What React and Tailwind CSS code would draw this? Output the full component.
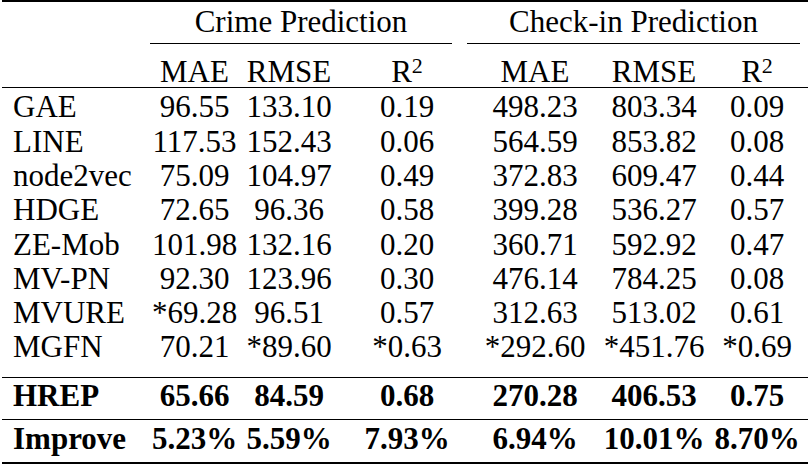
import React from 'react';

const rows = [
  ['GAE', '96.55', '133.10', '0.19', '498.23', '803.34', '0.09'],
  ['LINE', '117.53', '152.43', '0.06', '564.59', '853.82', '0.08'],
  ['node2vec', '75.09', '104.97', '0.49', '372.83', '609.47', '0.44'],
  ['HDGE', '72.65', '96.36', '0.58', '399.28', '536.27', '0.57'],
  ['ZE-Mob', '101.98', '132.16', '0.20', '360.71', '592.92', '0.47'],
  ['MV-PN', '92.30', '123.96', '0.30', '476.14', '784.25', '0.08'],
  ['MVURE', '*69.28', '96.51', '0.57', '312.63', '513.02', '0.61'],
  ['MGFN', '70.21', '*89.60', '*0.63', '*292.60', '*451.76', '*0.69'],
];

const grid = 'grid grid-cols-[148px_89px_100px_136px_120px_118px_88px_7px]';

const Row = ({ cells, bold }) => (
  <div className={`${grid} leading-[34.3px] ${bold ? 'font-bold' : ''}`}>
    <div className="pl-[11px] text-left">{cells[0]}</div>
    {cells.slice(1).map((c, i) => (
      <div key={i} className="text-center whitespace-nowrap">{c}</div>
    ))}
    <div />
  </div>
);

const R2 = () => (
  <span>
    R<sup className="text-[22px] top-[-9px]">2</sup>
  </span>
);

export default function App() {
  return (
    <div className="w-[811px] h-[467px] bg-white text-black font-['Liberation_Serif',serif] text-[31px]">
      <div className="ml-[2px] w-[806px] border-t-2 border-b-2 border-black">
        {/* group headers */}
        <div className={`${grid} pt-[3.4px]`}>
          <div />
          <div className="col-span-3 mr-[23px] border-b border-black text-center leading-[34.3px] pb-[3.3px]">
            Crime Prediction
          </div>
          <div className="col-span-3 -ml-[8px] mr-[1px] border-b border-black text-center leading-[34.3px] pb-[3.3px]">
            Check-in Prediction
          </div>
          <div />
        </div>

        {/* metric headers */}
        <div className={`${grid} pt-[12px] leading-[31px] border-b border-black`}>
          <div />
          <div className="text-center">MAE</div>
          <div className="text-center">RMSE</div>
          <div className="text-center"><R2 /></div>
          <div className="text-center">MAE</div>
          <div className="text-center">RMSE</div>
          <div className="text-center"><R2 /></div>
          <div />
        </div>

        {/* baselines */}
        <div className="pt-[2.4px] pb-[12.2px] border-b border-black">
          {rows.map((r) => (
            <Row key={r[0]} cells={r} />
          ))}
        </div>

        <div className="pt-[1.4px] pb-[5.3px] border-b border-black">
          <Row cells={['HREP', '65.66', '84.59', '0.68', '270.28', '406.53', '0.75']} bold />
        </div>

        <div className="pt-[2.4px] pb-[5.3px]">
          <Row cells={['Improve', '5.23%', '5.59%', '7.93%', '6.94%', '10.01%', '8.70%']} bold />
        </div>
      </div>
    </div>
  );
}
